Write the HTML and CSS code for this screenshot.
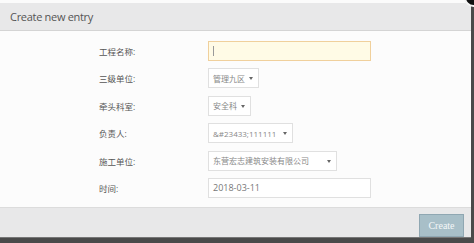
FILE: index.html
```html
<!DOCTYPE html>
<html lang="zh">
<head>
<meta charset="utf-8">
<title>Create new entry</title>
<link rel="stylesheet" href="styles.css">
</head>
<body>
<div class="dialog">
  <span class="close"></span>
  <div class="header">Create new entry</div>
  <div class="form">
    <div class="row">
      <label class="label">工程名称:</label>
      <div class="input focus"><span class="caret"></span></div>
    </div>
    <div class="row">
      <label class="label">三级单位:</label>
      <div class="select w1"><span>管理九区</span><i class="arrow"></i></div>
    </div>
    <div class="row">
      <label class="label">牵头科室:</label>
      <div class="select w2"><span>安全科</span><i class="arrow"></i></div>
    </div>
    <div class="row">
      <label class="label">负责人:</label>
      <div class="select w3"><span>&amp;#23433;111111</span><i class="arrow"></i></div>
    </div>
    <div class="row">
      <label class="label">施工单位:</label>
      <div class="select w4"><span>东营宏志建筑安装有限公司</span><i class="arrow"></i></div>
    </div>
    <div class="row">
      <label class="label">时间:</label>
      <div class="input date">2018-03-11</div>
    </div>
  </div>
  <div class="footer">
    <button class="btn">Create</button>
  </div>
</div>
</body>
</html>
```
FILE: styles.css
```css
html, body {
  margin: 0;
  padding: 0;
}
body {
  background: #4a4a4a;
  width: 474px;
  height: 243px;
  overflow: hidden;
  font-family: "Open Sans", "Noto Sans CJK SC", sans-serif;
}
.dialog {
  position: relative;
  width: 471px;
  background: #fbfbfb;
  padding-top: 3px;
  border-bottom: 1px solid #777;
}
.close {
  position: absolute;
  top: -12px;
  right: -12px;
  width: 15px;
  height: 15px;
  border-radius: 50%;
  background: #111;
  border: 2px solid #f4f4f4;
}
.header {
  height: 27px;
  border-bottom: 1px solid #d4d4d4;
  background: #e8e8e9;
  color: #555;
  font-size: 11px;
  letter-spacing: -0.3px;
  line-height: 28px;
  padding-left: 10px;
}
.form {
  padding: 10px 0 9px 99px;
  display: flex;
  flex-direction: column;
  gap: 7.4px;
  background: #fcfcfc;
}
.row {
  display: flex;
  align-items: center;
  height: 20px;
}
.label {
  width: 109px;
  font-size: 8.5px;
  color: #555;
}
.input, .select {
  box-sizing: border-box;
  height: 20px;
  border: 1px solid #e0e0e0;
  background: #fff;
  font-size: 8px;
  color: #888;
  display: flex;
  align-items: center;
  padding-left: 4px;
  position: relative;
}
.input {
  width: 163px;
}
.input.focus {
  background: #fffbe6;
  border-color: #f0d09c;
}
.caret {
  width: 1px;
  height: 10px;
  background: #999;
}
.date {
  color: #777;
  font-size: 9px;
}
.arrow {
  position: absolute;
  right: 5px;
  top: 8px;
  width: 0;
  height: 0;
  border-left: 2px solid transparent;
  border-right: 2px solid transparent;
  border-top: 3px solid #666;
}
.w1 { width: 51px; }
.w2 { width: 43px; }
.w3 { width: 85px; }
.w4 { width: 129px; }
.footer {
  border-top: 1px solid #dcdcdc;
  background: #e8e8e9;
  height: 30px;
  display: flex;
  justify-content: flex-end;
  align-items: flex-start;
  padding: 6px 7px 0 0;
  box-sizing: border-box;
}
.btn {
  width: 45px;
  height: 23px;
  background: #a8bfc8;
  border: 1px solid #8fa7b2;
  color: #f4f7f8;
  font-family: "Liberation Serif", serif;
  font-size: 10px;
  padding: 0;
}
```
